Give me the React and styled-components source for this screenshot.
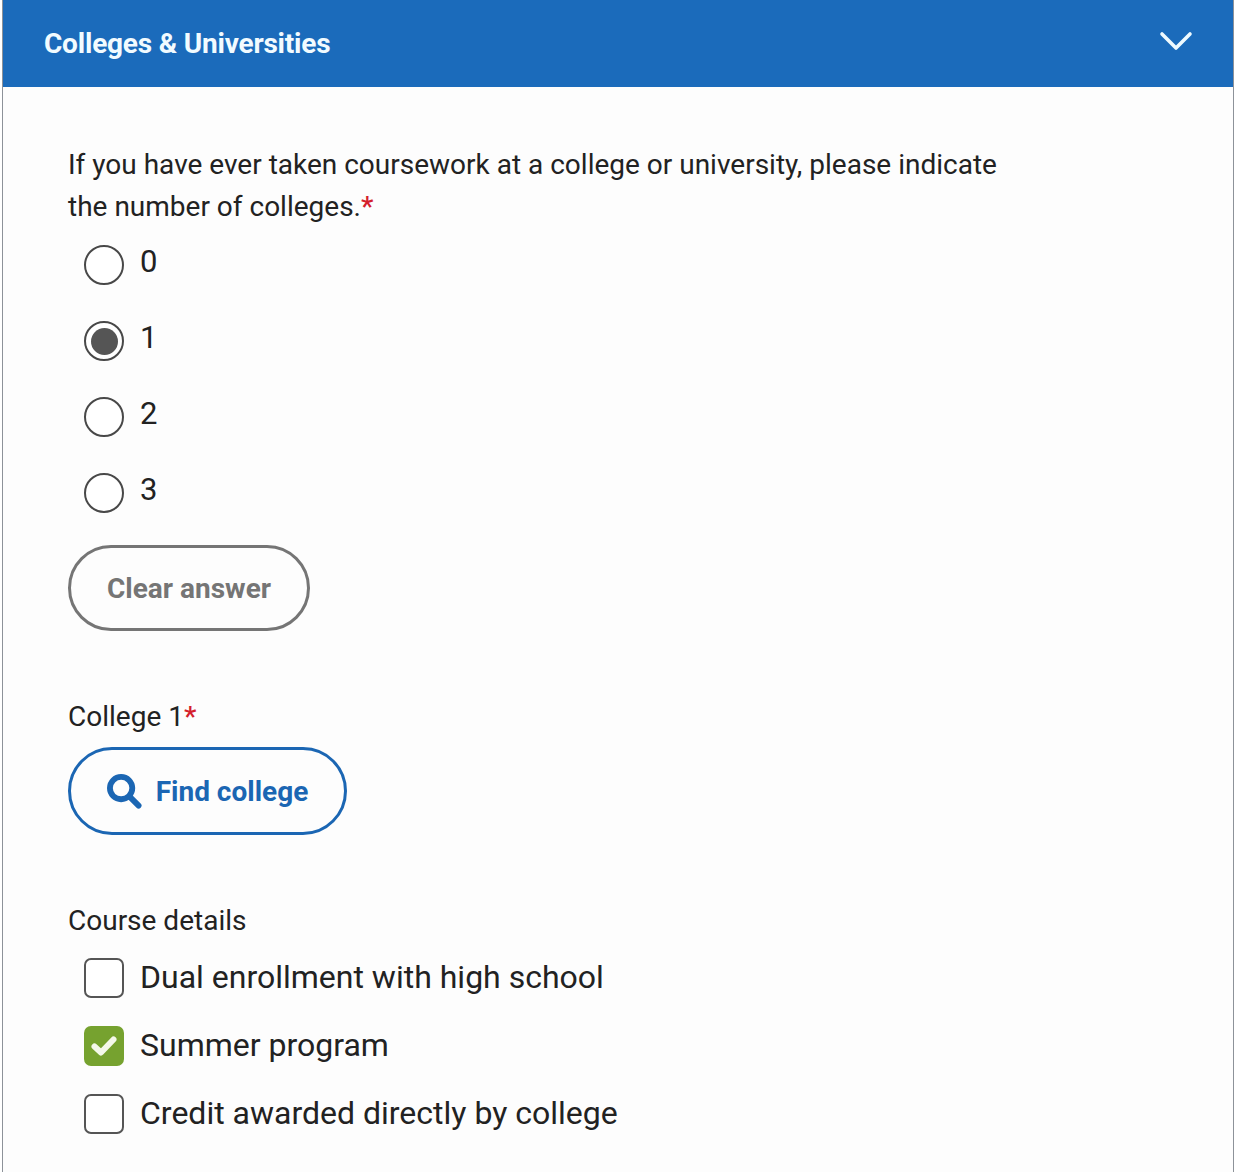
import React from 'react'
import styled, { createGlobalStyle } from 'styled-components'

const GlobalStyle = createGlobalStyle`
  html, body {
    margin: 0;
    padding: 0;
    background: #fff;
  }
  body {
    font-family: Roboto, "Liberation Sans", sans-serif;
    color: #222;
  }
`

const Page = styled.div`
  width: 1236px;
  height: 1172px;
  padding: 0 3px;
  box-sizing: border-box;
  overflow: hidden;
`

const Panel = styled.section`
  height: 100%;
  background: #fdfdfd;
  box-shadow: -1px 0 0 #8d9299, 1px 0 0 #8d9299;
`

const Header = styled.header`
  height: 87px;
  background: #1b6bbb;
  display: flex;
  align-items: center;
  justify-content: space-between;
  padding: 0 40px 0 41px;
`

const Title = styled.h2`
  margin: 0;
  font-size: 28px;
  font-weight: 700;
  letter-spacing: -0.2px;
  color: #f2fbff;
`

const Chevron = styled.svg`
  width: 34px;
  height: 22px;
  margin-top: -6px;
`

const Body = styled.div`
  padding: 57px 65px 0;
`

const Question = styled.p`
  margin: 0;
  width: 940px;
  font-size: 28px;
  line-height: 42px;
`

const Star = styled.span`
  color: #d4202c;
  font-weight: 500;
`

const OptionList = styled.div`
  display: flex;
  flex-direction: column;
  gap: ${p => p.$gap}px;
  padding-left: 16px;
  margin-top: ${p => p.$top}px;
`

const Option = styled.label`
  display: flex;
  align-items: center;
  gap: 16px;
  height: ${p => p.$height}px;
`

const Radio = styled.span`
  width: 40px;
  height: 40px;
  box-sizing: border-box;
  border: 2px solid #484848;
  border-radius: 50%;
  background: #fff;
  flex: none;
  display: flex;
  align-items: center;
  justify-content: center;
  &::after {
    content: '';
    display: ${p => (p.$checked ? 'block' : 'none')};
    width: 27px;
    height: 27px;
    border-radius: 50%;
    background: #555;
  }
`

const RadioText = styled.span`
  font-size: 31px;
  line-height: 36px;
  margin-top: -7px;
`

const Check = styled.span`
  width: 40px;
  height: 40px;
  box-sizing: border-box;
  border: ${p => (p.$checked ? 'none' : '2px solid #555')};
  border-radius: 7px;
  background: ${p => (p.$checked ? '#76a22f' : '#fff')};
  flex: none;
  display: flex;
  align-items: center;
  justify-content: center;
`

const CheckText = styled.span`
  font-size: 32px;
  line-height: 38px;
  margin-top: -3px;
`

const PillButton = styled.button`
  display: flex;
  align-items: center;
  justify-content: center;
  gap: 14px;
  box-sizing: border-box;
  width: ${p => p.$width}px;
  height: ${p => p.$height}px;
  margin-top: ${p => p.$top}px;
  padding: 0;
  background: #fdfdfd;
  border: 3px solid ${p => p.$color};
  border-radius: 44px;
  color: ${p => p.$color};
  font-family: inherit;
  font-size: 28px;
  font-weight: 700;
`

const FieldLabel = styled.div`
  font-size: 28px;
  line-height: 36px;
  margin-top: ${p => p.$top}px;
`

export default function App() {
  return (
    <Page>
      <GlobalStyle />
      <Panel>
        <Header>
          <Title>Colleges &amp; Universities</Title>
          <Chevron viewBox="0 0 34 22" fill="none">
            <path d="M3 4 L17 18 L31 4" stroke="#eefaff" strokeWidth="3.6" strokeLinecap="round" strokeLinejoin="round" />
          </Chevron>
        </Header>
        <Body>
          <Question>
            If you have ever taken coursework at a college or university, please indicate the number of colleges.<Star>*</Star>
          </Question>
          <OptionList $gap={36} $top={17}>
            {['0', '1', '2', '3'].map(n => (
              <Option key={n} $height={40}>
                <Radio $checked={n === '1'} />
                <RadioText>{n}</RadioText>
              </Option>
            ))}
          </OptionList>
          <PillButton $color="#757575" $width={242} $height={86} $top={32}>Clear answer</PillButton>
          <FieldLabel $top={68}>College 1<Star>*</Star></FieldLabel>
          <PillButton $color="#1b66b3" $width={279} $height={88} $top={12}>
            <svg width="35" height="35" viewBox="0 0 36 36" fill="none">
              <circle cx="14.5" cy="14.5" r="11.5" stroke="#1b66b3" strokeWidth="6" />
              <path d="M23 23 L32.5 32.5" stroke="#1b66b3" strokeWidth="6" strokeLinecap="round" />
            </svg>
            Find college
          </PillButton>
          <FieldLabel $top={68}>Course details</FieldLabel>
          <OptionList $gap={28} $top={19}>
            <Option $height={40}>
              <Check />
              <CheckText>Dual enrollment with high school</CheckText>
            </Option>
            <Option $height={40}>
              <Check $checked>
                <svg width="28" height="24" viewBox="0 0 28 24" fill="none">
                  <path d="M4.5 12.5 L11 18.5 L23.5 5.5" stroke="#f4f8ea" strokeWidth="6" strokeLinecap="round" strokeLinejoin="round" />
                </svg>
              </Check>
              <CheckText>Summer program</CheckText>
            </Option>
            <Option $height={40}>
              <Check />
              <CheckText>Credit awarded directly by college</CheckText>
            </Option>
          </OptionList>
        </Body>
      </Panel>
    </Page>
  )
}
